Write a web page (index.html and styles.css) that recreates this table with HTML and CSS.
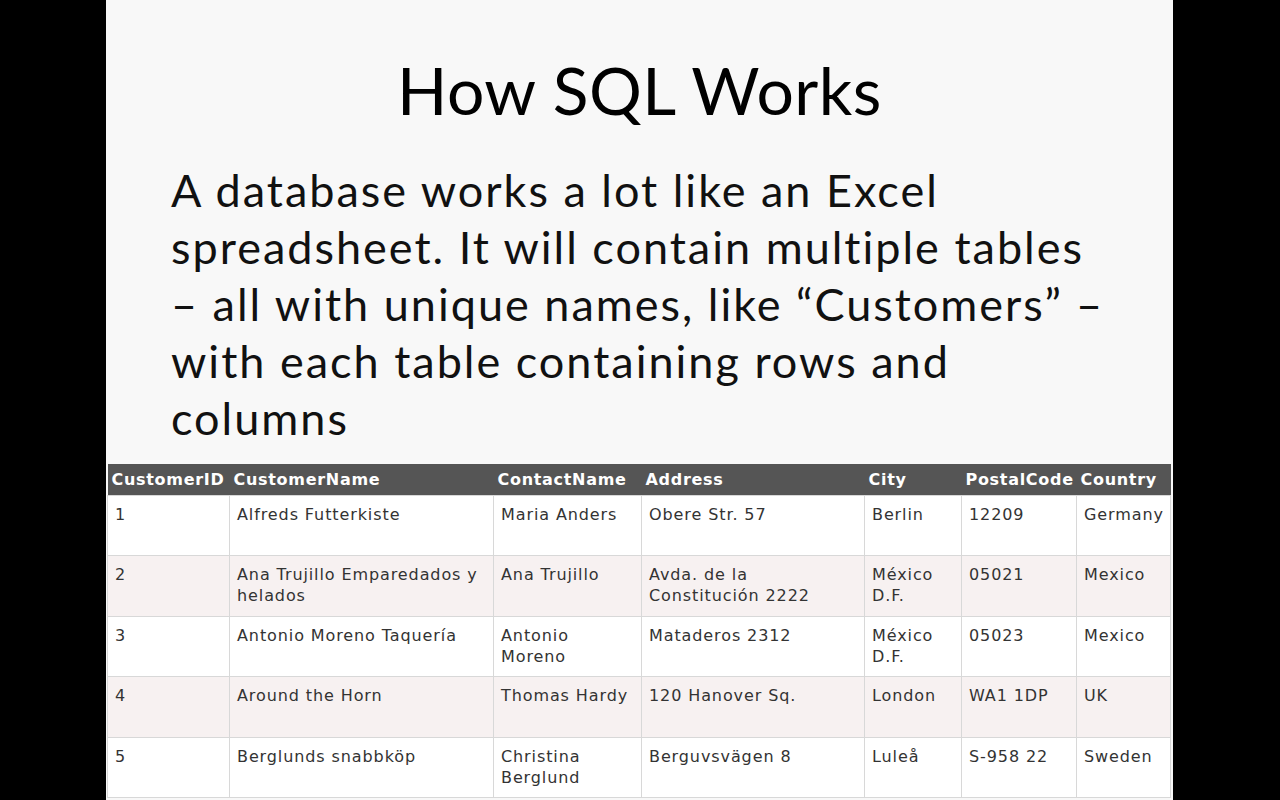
FILE: index.html
```html
<!DOCTYPE html>
<html lang="en">
<head>
<meta charset="utf-8">
<title>How SQL Works</title>
<link rel="stylesheet" href="styles.css">
</head>
<body>
<main class="slide">
  <h1 class="title">How SQL Works</h1>
  <p class="body-text">A database works a lot like an Excel<br>spreadsheet. It will contain multiple tables<br>– all with unique names, like “Customers” –<br>with each table containing rows and<br>columns</p>
  <table class="data">
    <colgroup>
      <col class="c1"><col class="c2"><col class="c3"><col class="c4"><col class="c5"><col class="c6"><col class="c7">
    </colgroup>
    <thead>
      <tr><th>CustomerID</th><th>CustomerName</th><th>ContactName</th><th>Address</th><th>City</th><th>PostalCode</th><th>Country</th></tr>
    </thead>
    <tbody>
      <tr><td>1</td><td>Alfreds Futterkiste</td><td>Maria Anders</td><td>Obere Str. 57</td><td>Berlin</td><td>12209</td><td>Germany</td></tr>
      <tr><td>2</td><td>Ana Trujillo Emparedados y helados</td><td>Ana Trujillo</td><td>Avda. de la Constitución 2222</td><td>México D.F.</td><td>05021</td><td>Mexico</td></tr>
      <tr><td>3</td><td>Antonio Moreno Taquería</td><td>Antonio Moreno</td><td>Mataderos 2312</td><td>México D.F.</td><td>05023</td><td>Mexico</td></tr>
      <tr><td>4</td><td>Around the Horn</td><td>Thomas Hardy</td><td>120 Hanover Sq.</td><td>London</td><td>WA1 1DP</td><td>UK</td></tr>
      <tr><td>5</td><td>Berglunds snabbköp</td><td>Christina Berglund</td><td>Berguvsvägen 8</td><td>Luleå</td><td>S-958 22</td><td>Sweden</td></tr>
    </tbody>
  </table>
</main>
</body>
</html>
```

FILE: styles.css
```css
html, body {
  margin: 0;
  padding: 0;
  background: #000;
  height: 800px;
  overflow: hidden;
}

.slide {
  width: 1067px;
  height: 800px;
  margin: 0 0 0 106px;
  background: #f8f8f8;
  overflow: hidden;
  display: flex;
  flex-direction: column;
}

.title {
  margin: 50px 0 0;
  font-family: Lato, "Open Sans", sans-serif;
  font-weight: 400;
  font-size: 66px;
  letter-spacing: 0.5px;
  line-height: 80px;
  color: #000;
  text-align: center;
}

.body-text {
  width: 995px;
  margin: 32px 0 0 65px;
  font-family: Lato, "Open Sans", sans-serif;
  font-weight: 400;
  font-size: 45px;
  letter-spacing: 2px;
  line-height: 57px;
  white-space: nowrap;
  color: #111;
}

.data {
  margin: 17px 0 0 1px;
  width: 1063px;
  table-layout: fixed;
  border-collapse: collapse;
  font-family: "DejaVu Sans", Verdana, sans-serif;
  font-size: 16px;
  letter-spacing: 0.9px;
  line-height: 21px;
  color: #333;
}

.c1 { width: 122px; }
.c2 { width: 264px; }
.c3 { width: 148px; }
.c4 { width: 223px; }
.c5 { width: 97px; }
.c6 { width: 115px; }
.c7 { width: 94px; }

.data th {
  background: #555;
  color: #fff;
  font-weight: bold;
  letter-spacing: 0.7px;
  text-align: left;
  height: 31px;
  padding: 0 0 0 4px;
  white-space: nowrap;
  box-sizing: border-box;
}

.data td {
  border: 1px solid #d8d8d8;
  vertical-align: top;
  padding: 8px 8px 0 7px;
  height: 60.6px;
  box-sizing: border-box;
}

.data tbody tr:nth-child(even) td {
  background: #f7f1f1;
}

.data tbody tr:nth-child(odd) td {
  background: #fff;
}
```
